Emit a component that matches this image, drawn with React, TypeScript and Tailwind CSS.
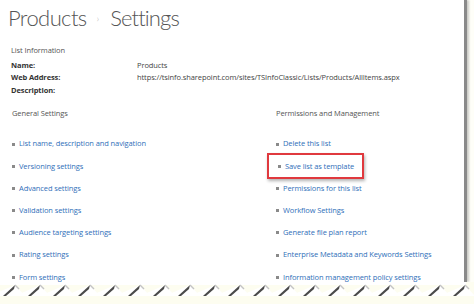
import React from 'react';

const general = [
  'List name, description and navigation',
  'Versioning settings',
  'Advanced settings',
  'Validation settings',
  'Audience targeting settings',
  'Rating settings',
  'Form settings',
];

const permissions = [
  'Delete this list',
  'Save list as template',
  'Permissions for this list',
  'Workflow Settings',
  'Generate file plan report',
  'Enterprise Metadata and Keywords Settings',
  'Information management policy settings',
];

function LinkItem({ label, boxed }: { label: string; boxed?: boolean }) {
  return (
    <div className="h-[22.2px] flex items-center">
      <div
        className={
          boxed
            ? 'flex items-center gap-[4px] -ml-[9px] pl-[9px] pr-[8px] h-[26px] border-2 border-[#e0393e] shadow-[1px_2px_3px_rgba(0,0,0,0.3)]'
            : 'flex items-center gap-[4px]'
        }
      >
        <span className="w-[3px] h-[3px] bg-[#8a8a8a]" />
        <span className="text-[#2f6fb9] text-[7.5px] tracking-[-0.1px]">{label}</span>
      </div>
    </div>
  );
}

function TornEdge() {
  const teeth = Array.from({ length: 19 }, (_, i) => i);
  return (
    <svg width="474" height="22" viewBox="0 0 474 22" className="block">
      <rect x="0" y="0" width="474" height="22" fill="#fdfdf0" />
      <rect x="0" y="0" width="466" height="3" fill="#ffffff" />
      {teeth.map((i) => {
        const x = i * 25 - 10;
        return (
          <g key={i}>
            <polygon points={`${x},14 ${x + 25},3 ${x + 35},14`} fill="#ffffff" />
            <polygon points={`${x + 13},14 ${x + 25},3 ${x + 24},7 ${x + 16},14`} fill="#4a4a4a" />
            <line x1={x + 25} y1={3} x2={x + 29} y2={7} stroke="#c4c4c4" strokeWidth="1.5" />
          </g>
        );
      })}
    </svg>
  );
}

export default function App() {
  return (
    <div className="w-[474px] h-[304px] overflow-hidden bg-[#fefef8] font-['Open_Sans','Noto_Sans',sans-serif] text-[#444]">
      <div className="w-[467px] h-[282px] pt-[4px] bg-white border-r-[3px] border-[#8a8a8a] shadow-[2px_0_2px_rgba(0,0,0,0.2)]">
        <div className="flex items-center pl-[8px] h-[28px] font-['Lato','Open_Sans',sans-serif] font-light text-[#555] text-[22px] leading-none">
          <span className="tracking-[-0.6px]">Products</span>
          <span className="text-[10px] text-[#aaa] ml-[10px] mr-[11px]">›</span>
          <span className="tracking-[-0.9px]">Settings</span>
        </div>
        <div className="mt-[12px] pl-[11px] text-[7.5px] tracking-[-0.1px] leading-[12.5px]">
          <div className="text-[#555] mb-[2px]">List Information</div>
          <div className="flex">
            <span className="w-[126px] font-bold text-[#333]">Name:</span>
            <span>Products</span>
          </div>
          <div className="flex">
            <span className="w-[126px] font-bold text-[#333]">Web Address:</span>
            <span>https://tsinfo.sharepoint.com/sites/TSInfoClassic/Lists/Products/AllItems.aspx</span>
          </div>
          <div className="flex">
            <span className="w-[126px] font-bold text-[#333]">Description:</span>
          </div>
        </div>
        <div className="mt-[12px] flex pl-[12px]">
          <div className="w-[264px]">
            <div className="text-[7.5px] tracking-[-0.1px] text-[#555] h-[12px]">General Settings</div>
            <div className="mt-[13px]">
              {general.map((g) => (
                <LinkItem key={g} label={g} />
              ))}
            </div>
          </div>
          <div>
            <div className="text-[7.5px] tracking-[-0.1px] text-[#555] h-[12px]">Permissions and Management</div>
            <div className="mt-[13px]">
              {permissions.map((p, i) => (
                <LinkItem key={p} label={p} boxed={i === 1} />
              ))}
            </div>
          </div>
        </div>
      </div>
      <TornEdge />
    </div>
  );
}
